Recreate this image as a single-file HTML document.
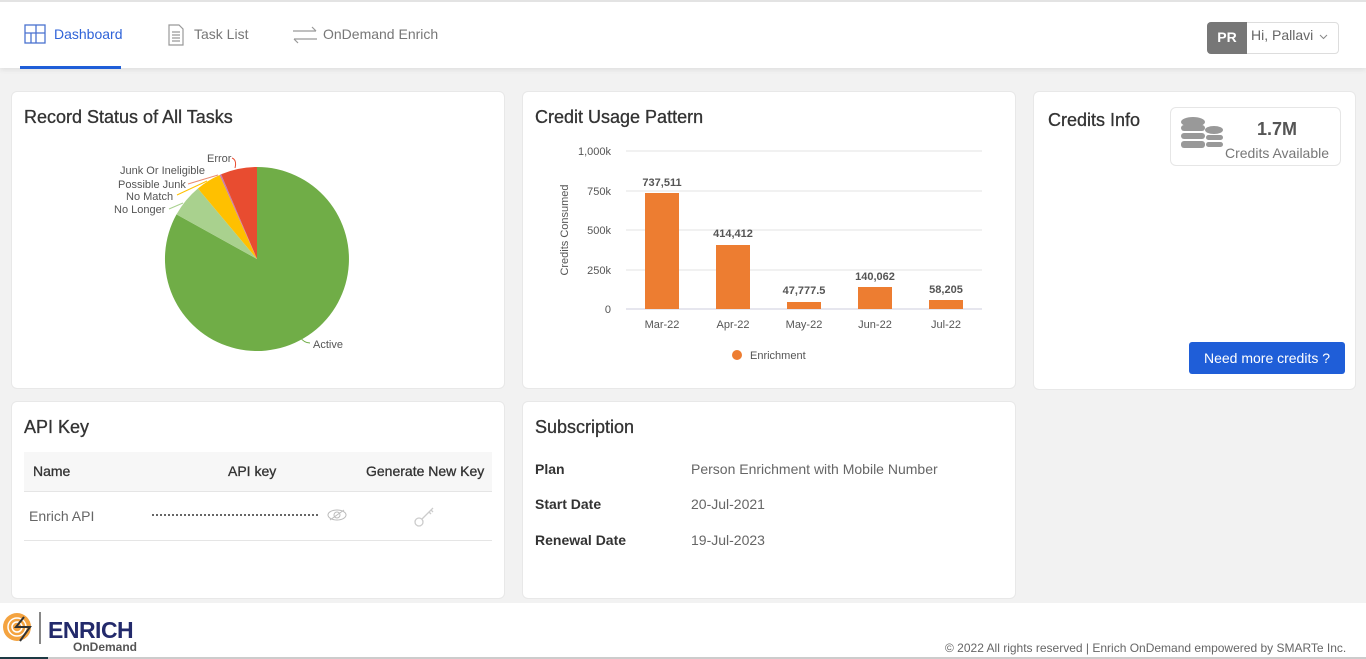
<!DOCTYPE html>
<html><head><meta charset="utf-8"><style>
*{margin:0;padding:0;box-sizing:border-box}
body{width:1366px;height:659px;background:#f2f2f2;font-family:"Liberation Sans",Arial,sans-serif;position:relative;overflow:hidden;color:#333}
.abs{position:absolute}
.hdr{left:0;top:0;width:1366px;height:68px;background:#fff;border-top:2px solid #e3e3e3;box-shadow:0 2px 5px rgba(0,0,0,.08)}
.card{position:absolute;background:#fff;border-radius:6px;border:1px solid #e8e8e8}
.title{position:absolute;font-size:18px;color:#333;left:12px;-webkit-text-stroke:0.3px #333}
.nav{position:absolute;top:24px;font-size:14px;color:#777}
.t{position:absolute;white-space:nowrap}
</style></head><body>
<div class="abs hdr">
 <svg class="abs" style="left:24px;top:22px" width="22" height="20" viewBox="0 0 22 20" fill="none" stroke="#4a72d0" stroke-width="1.3"><rect x="1" y="1" width="20" height="18"/><line x1="1" y1="9" x2="21" y2="9"/><line x1="12" y1="1" x2="12" y2="19"/><line x1="7" y1="9" x2="7" y2="19"/></svg>
 <div class="nav" style="left:54px;color:#2f63d8">Dashboard</div>
 <div class="abs" style="left:20px;top:64px;width:101px;height:3px;background:#1f5ed8"></div>
 <svg class="abs" style="left:168px;top:22px" width="16" height="22" viewBox="0 0 16 22" fill="none" stroke="#999" stroke-width="1.2"><path d="M1 1h10l4 4v16H1z"/><path d="M4 8h8M4 11h8M4 14h8M4 17h8"/></svg>
 <div class="nav" style="left:194px">Task List</div>
 <svg class="abs" style="left:292px;top:23px" width="26" height="20" viewBox="0 0 26 20" fill="none" stroke="#999" stroke-width="1.2"><path d="M1 6h23M20 2l4 4"/><path d="M25 14H2M6 18l-4-4"/></svg>
 <div class="nav" style="left:323px">OnDemand Enrich</div>
 <div class="abs" style="left:1207px;top:20px;width:132px;height:32px;border:1px solid #ddd;border-radius:4px;background:#fff"></div>
 <div class="abs" style="left:1207px;top:20px;width:40px;height:32px;background:#777;border-radius:4px 0 0 4px;color:#fff;font-size:14px;font-weight:bold;text-align:center;line-height:30px">PR</div>
 <div class="t" style="left:1251px;top:25px;font-size:14px;color:#666">Hi, Pallavi</div>
 <svg class="abs" style="left:1319px;top:32px" width="9" height="6" viewBox="0 0 9 6" fill="none" stroke="#888"><path d="M1 1l3.5 3.5L8 1"/></svg>
</div>

<div class="card" style="left:11px;top:91px;width:494px;height:298px">
 <div class="title" style="top:15px">Record Status of All Tasks</div>
</div>
<svg class="abs" style="left:0;top:0" width="510" height="390">
 <path d="M257,259 L257,167 A92,92 0 1 1 176.5,214.4 Z" fill="#70ad47"/>
 <path d="M257,259 L176.5,214.4 A92,92 0 0 1 197.9,188.5 Z" fill="#a9d18e"/>
 <path d="M257,259 L197.9,188.5 A92,92 0 0 1 219.6,175 Z" fill="#ffc000"/>
 <path d="M257,259 L219.6,175 A92,92 0 0 1 221.1,174.3 Z" fill="#c77dab"/>
 <path d="M257,259 L221.1,174.3 A92,92 0 0 1 257,167 Z" fill="#e84c30"/>
 <g fill="none" stroke-width="1"><path d="M300,337 q4,6 10,6" stroke="#70ad47"/><path d="M183,203 l-14,6" stroke="#a9d18e"/><path d="M207,181 l-30,14" stroke="#ffc000"/><path d="M218,175 l-30,9" stroke="#e88a70"/><path d="M235,168 q2,-8 -3,-10" stroke="#e84c30"/></g>
 <g font-family="Liberation Sans,Arial" font-size="11" fill="#555"><text x="313" y="348">Active</text><text x="114" y="213">No Longer</text><text x="126" y="200">No Match</text><text x="118" y="188">Possible Junk</text><text x="120" y="174">Junk Or Ineligible</text><text x="207" y="162">Error</text></g>
</svg>

<div class="card" style="left:522px;top:91px;width:494px;height:298px">
 <div class="title" style="top:15px">Credit Usage Pattern</div>
</div>
<svg class="abs" style="left:522px;top:91px" width="494" height="298">
 <g stroke="#e3e3e3"><line x1="104" y1="60" x2="460" y2="60"/><line x1="104" y1="100" x2="460" y2="100"/><line x1="104" y1="139" x2="460" y2="139"/><line x1="104" y1="179" x2="460" y2="179"/></g>
 <line x1="104" y1="218" x2="460" y2="218" stroke="#ccd"/>
 <g font-family="Liberation Sans,Arial" font-size="11" fill="#555" text-anchor="end"><text x="89" y="64">1,000k</text><text x="89" y="104">750k</text><text x="89" y="143">500k</text><text x="89" y="183">250k</text><text x="89" y="222">0</text></g>
 <text transform="translate(46,139) rotate(-90)" text-anchor="middle" font-family="Liberation Sans,Arial" font-size="11" fill="#555">Credits Consumed</text>
 <g fill="#ed7d31"><rect x="123" y="102" width="34" height="116"/><rect x="194" y="154" width="34" height="64"/><rect x="265" y="211" width="34" height="7"/><rect x="336" y="196" width="34" height="22"/><rect x="407" y="209" width="34" height="9"/></g>
 <g font-family="Liberation Sans,Arial" font-size="11" fill="#555" font-weight="bold" text-anchor="middle"><text x="140" y="95">737,511</text><text x="211" y="146">414,412</text><text x="282" y="203">47,777.5</text><text x="353" y="189">140,062</text><text x="424" y="202">58,205</text></g>
 <g font-family="Liberation Sans,Arial" font-size="11" fill="#555" text-anchor="middle"><text x="140" y="237">Mar-22</text><text x="211" y="237">Apr-22</text><text x="282" y="237">May-22</text><text x="353" y="237">Jun-22</text><text x="424" y="237">Jul-22</text></g>
 <circle cx="215" cy="264" r="5" fill="#ed7d31"/><text x="228" y="268" font-family="Liberation Sans,Arial" font-size="11" fill="#555">Enrichment</text>
</svg>

<div class="card" style="left:1033px;top:91px;width:323px;height:299px">
 <div class="title" style="top:18px;left:14px">Credits Info</div>
 <div class="abs" style="left:136px;top:15px;width:171px;height:59px;border:1px solid #e6e6e6;border-radius:6px"></div>
 <svg class="abs" style="left:146px;top:24px" width="44" height="38" viewBox="0 0 44 38" fill="#999"><ellipse cx="13" cy="6" rx="12" ry="5"/><rect x="1" y="9" width="24" height="6" rx="3"/><rect x="1" y="17" width="24" height="6" rx="3"/><rect x="1" y="25" width="24" height="7" rx="3"/><ellipse cx="34" cy="14" rx="9" ry="4"/><rect x="26" y="19" width="17" height="5" rx="2.5"/><rect x="26" y="26" width="17" height="5" rx="2.5"/></svg>
 <div class="t" style="left:223px;top:27px;font-size:18px;font-weight:bold;color:#555">1.7M</div>
 <div class="t" style="left:191px;top:53px;font-size:14px;color:#777">Credits Available</div>
 <div class="abs" style="left:155px;top:250px;width:156px;height:32px;background:#1f5ed8;border-radius:3px;color:#fff;font-size:14px;text-align:center;line-height:32px">Need more credits ?</div>
</div>

<div class="card" style="left:11px;top:401px;width:494px;height:198px">
 <div class="title" style="top:15px">API Key</div>
 <div class="abs" style="left:12px;top:50px;width:468px;height:40px;background:#f7f7f7;border-bottom:1px solid #e5e5e5"></div>
 <div class="t" style="left:21px;top:61px;font-size:14px;color:#333;-webkit-text-stroke:0.3px #333">Name</div>
 <div class="t" style="left:216px;top:61px;font-size:14px;color:#333;-webkit-text-stroke:0.3px #333">API key</div>
 <div class="t" style="left:354px;top:61px;font-size:14px;color:#333;-webkit-text-stroke:0.3px #333">Generate New Key</div>
 <div class="t" style="left:17px;top:106px;font-size:14px;color:#666">Enrich API</div>
 <svg class="abs" style="left:139px;top:111px" width="168" height="4"><line x1="1" y1="2" x2="167" y2="2" stroke="#666" stroke-width="2" stroke-dasharray="2 2"/></svg>
 <svg class="abs" style="left:314px;top:106px" width="22" height="14" viewBox="0 0 22 14" fill="none" stroke="#bbb"><ellipse cx="11" cy="7" rx="9" ry="5"/><circle cx="11" cy="7" r="3"/><line x1="4" y1="12" x2="18" y2="2"/></svg>
 <svg class="abs" style="left:401px;top:102px" width="24" height="24" viewBox="0 0 24 24" fill="none" stroke="#ccc" stroke-width="1.3"><circle cx="6" cy="18" r="4"/><path d="M9 15l11-11M16 8l2 2M18 6l2 2"/></svg>
 <div class="abs" style="left:12px;top:138px;width:468px;height:1px;background:#e5e5e5"></div>
</div>

<div class="card" style="left:522px;top:401px;width:494px;height:198px">
 <div class="title" style="top:15px">Subscription</div>
 <div class="t" style="left:12px;top:59px;font-size:14px;font-weight:bold;color:#333">Plan</div>
 <div class="t" style="left:168px;top:59px;font-size:14px;color:#666">Person Enrichment with Mobile Number</div>
 <div class="t" style="left:12px;top:94px;font-size:14px;font-weight:bold;color:#333">Start Date</div>
 <div class="t" style="left:168px;top:94px;font-size:14px;color:#666">20-Jul-2021</div>
 <div class="t" style="left:12px;top:130px;font-size:14px;font-weight:bold;color:#333">Renewal Date</div>
 <div class="t" style="left:168px;top:130px;font-size:14px;color:#666">19-Jul-2023</div>
</div>

<div class="abs" style="left:0;top:603px;width:1366px;height:56px;background:#fff"></div>
<div class="abs" style="left:0;top:657px;width:1366px;height:2px;background:#ccc"></div>
<div class="abs" style="left:0;top:657px;width:48px;height:2px;background:#1d3a44"></div>
<svg class="abs" style="left:2px;top:611px" width="34" height="34" viewBox="0 0 34 34"><circle cx="15" cy="16" r="14" fill="#f4a340"/><circle cx="15" cy="16" r="9" fill="none" stroke="#fff" stroke-width="1.5"/><circle cx="15" cy="16" r="5" fill="none" stroke="#fff" stroke-width="1.5"/><path d="M22 6l-8 10h14l-10 14" fill="none" stroke="#333" stroke-width="2"/></svg>
<div class="abs" style="left:39px;top:612px;width:1.5px;height:32px;background:#888"></div>
<div class="t" style="left:48px;top:617px;font-size:23px;font-weight:bold;color:#232a6b;letter-spacing:-0.5px">ENRICH</div>
<div class="t" style="left:73px;top:640px;font-size:12px;font-weight:bold;color:#555">OnDemand</div>
<div class="t" style="left:945px;top:641px;font-size:12px;color:#666">© 2022 All rights reserved | Enrich OnDemand empowered by SMARTe Inc.</div>
</body></html>
